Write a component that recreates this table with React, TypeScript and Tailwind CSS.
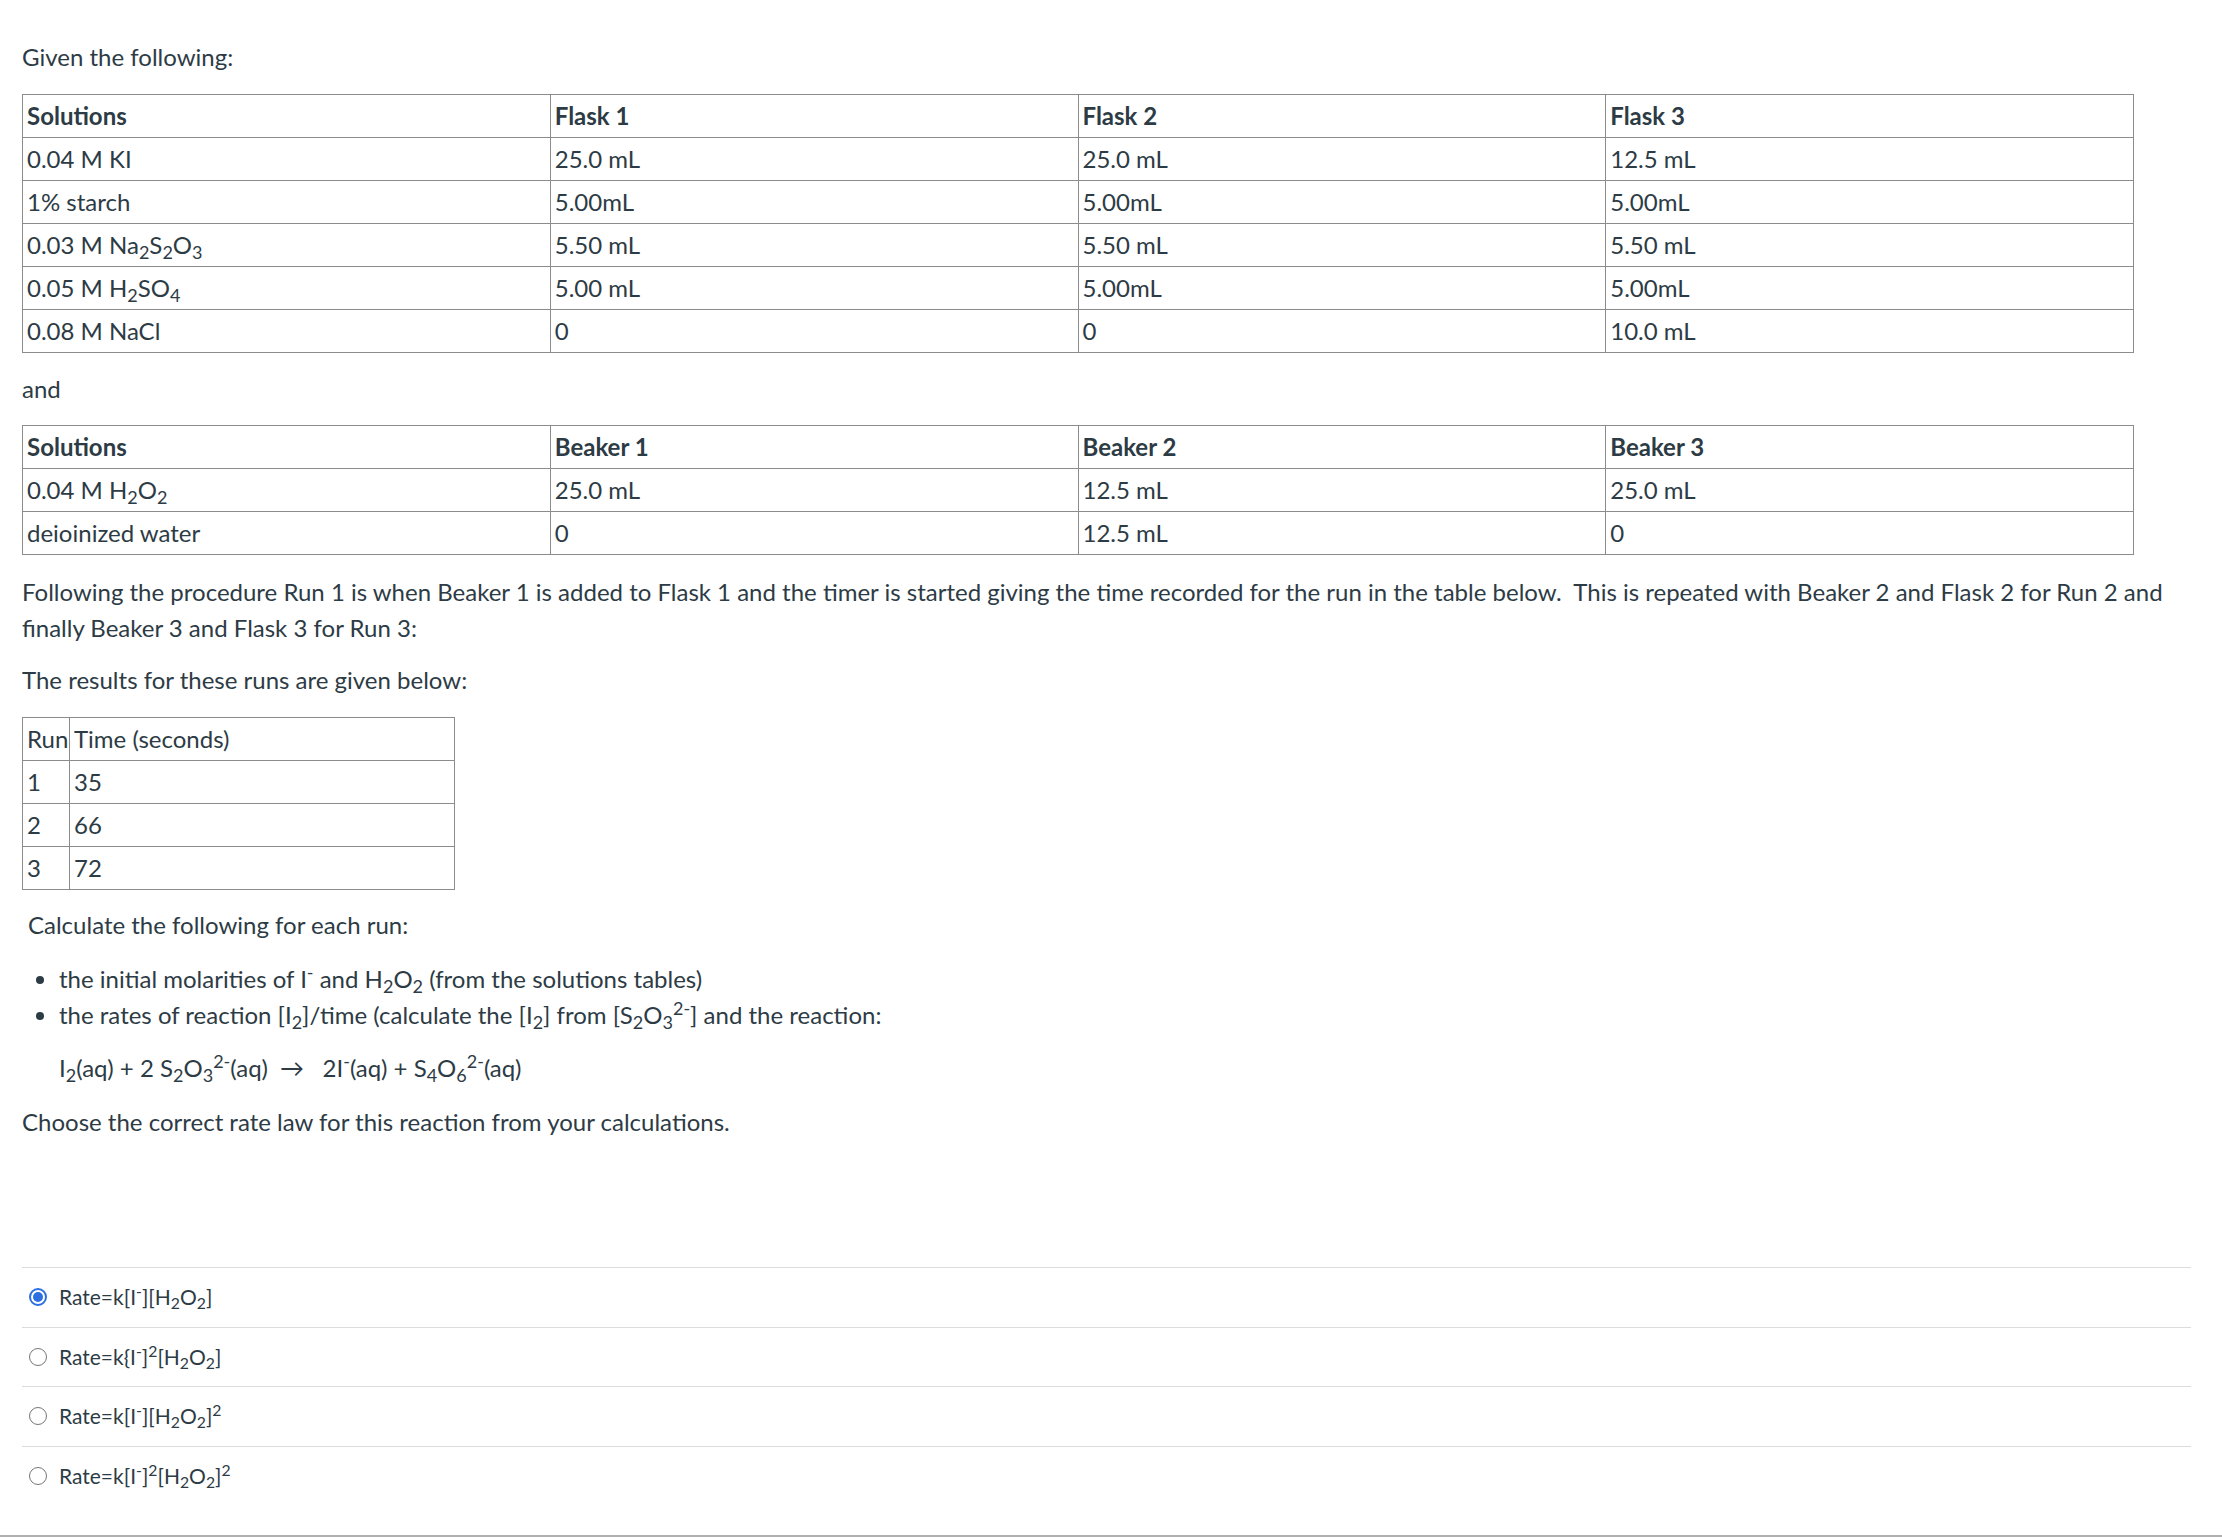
import React from "react";

const cell = "border border-[#8c8c8c] px-[4px] py-[3px] text-left align-top";
const head = cell + " font-bold";

const Minus = () => <sup>-</sup>;
const TwoMinus = () => <sup>2-</sup>;

const flaskRows: [React.ReactNode, string, string, string][] = [
  ["0.04 M KI", "25.0 mL", "25.0 mL", "12.5 mL"],
  ["1% starch", "5.00mL", "5.00mL", "5.00mL"],
  [
    <>0.03 M Na<sub>2</sub>S<sub>2</sub>O<sub>3</sub></>,
    "5.50 mL",
    "5.50 mL",
    "5.50 mL",
  ],
  [<>0.05 M H<sub>2</sub>SO<sub>4</sub></>, "5.00 mL", "5.00mL", "5.00mL"],
  ["0.08 M NaCl", "0", "0", "10.0 mL"],
];

const beakerRows: [React.ReactNode, string, string, string][] = [
  [<>0.04 M H<sub>2</sub>O<sub>2</sub></>, "25.0 mL", "12.5 mL", "25.0 mL"],
  ["deioinized water", "0", "12.5 mL", "0"],
];

const runs = [
  ["1", "35"],
  ["2", "66"],
  ["3", "72"],
];

const Radio = ({ checked }: { checked?: boolean }) =>
  checked ? (
    <span className="w-[18px] h-[18px] rounded-full border-2 border-[#2b6fe0] flex items-center justify-center shrink-0">
      <span className="w-[10px] h-[10px] rounded-full bg-[#2b6fe0]" />
    </span>
  ) : (
    <span className="w-[18px] h-[18px] rounded-full border-[1.5px] border-[#767676] shrink-0" />
  );

const options: { label: React.ReactNode; checked?: boolean }[] = [
  {
    label: <>Rate=k[I<Minus />][H<sub>2</sub>O<sub>2</sub>]</>,
    checked: true,
  },
  { label: <>Rate=k{"{"}I<Minus />]<sup>2</sup>[H<sub>2</sub>O<sub>2</sub>]</> },
  { label: <>Rate=k[I<Minus />][H<sub>2</sub>O<sub>2</sub>]<sup>2</sup></> },
  { label: <>Rate=k[I<Minus />]<sup>2</sup>[H<sub>2</sub>O<sub>2</sub>]<sup>2</sup></> },
];

export default function App() {
  return (
    <div className="bg-white w-[2222px] h-[1538px] overflow-hidden font-['Lato','Open_Sans',sans-serif] text-[#2d3b45] text-[24px] leading-[36px]">
      <div className="pl-[22px] w-[2191px] pt-[39px]">
        <p>Given the following:</p>

        <table className="mt-[19px] w-[2112px] table-fixed border-collapse">
          <tbody>
            <tr>
              <th className={head}>Solutions</th>
              <th className={head}>Flask 1</th>
              <th className={head}>Flask 2</th>
              <th className={head}>Flask 3</th>
            </tr>
            {flaskRows.map((r, i) => (
              <tr key={i}>
                {r.map((c, j) => (
                  <td key={j} className={cell}>
                    {c}
                  </td>
                ))}
              </tr>
            ))}
          </tbody>
        </table>

        <p className="mt-[18px]">and</p>

        <table className="mt-[18px] w-[2112px] table-fixed border-collapse">
          <tbody>
            <tr>
              <th className={head}>Solutions</th>
              <th className={head}>Beaker 1</th>
              <th className={head}>Beaker 2</th>
              <th className={head}>Beaker 3</th>
            </tr>
            {beakerRows.map((r, i) => (
              <tr key={i}>
                {r.map((c, j) => (
                  <td key={j} className={cell}>
                    {c}
                  </td>
                ))}
              </tr>
            ))}
          </tbody>
        </table>

        <p className="mt-[19px] pr-[20px] leading-[35.5px]">
          Following the procedure Run 1 is when Beaker 1 is added to Flask 1 and the timer is started giving the
          time recorded for the run in the table below.&nbsp; This is repeated with Beaker 2 and Flask 2 for Run 2
          and finally Beaker 3 and Flask 3 for Run 3:
        </p>

        <p className="mt-[17px]">The results for these runs are given below:</p>

        <table className="mt-[19px] w-[433px] table-fixed border-collapse">
          <colgroup>
            <col className="w-[47px]" />
            <col />
          </colgroup>
          <tbody>
            <tr>
              <td className={cell}>Run</td>
              <td className={cell}>Time (seconds)</td>
            </tr>
            {runs.map(([a, b]) => (
              <tr key={a}>
                <td className={cell}>{a}</td>
                <td className={cell}>{b}</td>
              </tr>
            ))}
          </tbody>
        </table>

        <div className="pl-[6px]">
          <p className="mt-[17px]">Calculate the following for each run:</p>
        </div>

        <ul className="mt-[18px] list-disc pl-[37px]">
          <li>
            the initial molarities of I<Minus /> and H<sub>2</sub>O<sub>2</sub> (from the solutions tables)
          </li>
          <li>
            the rates of reaction [I<sub>2</sub>]/time (calculate the [I<sub>2</sub>] from [S<sub>2</sub>O
            <sub>3</sub>
            <TwoMinus />] and the reaction:
          </li>
        </ul>

        <p className="mt-[17px] pl-[37px]">
          I<sub>2</sub>(aq) + 2 S<sub>2</sub>O<sub>3</sub>
          <TwoMinus />
          (aq)&nbsp; →&nbsp;&nbsp; 2I<Minus />(aq) + S<sub>4</sub>O<sub>6</sub>
          <TwoMinus />
          (aq)
        </p>

        <p className="mt-[18px]">Choose the correct rate law for this reaction from your calculations.</p>

        <div className="mt-[127px] w-[2169px]">
          {options.map((o, i) => (
            <div
              key={i}
              className="h-[59.5px] border-t border-[#dcdcdc] flex items-center gap-[12px] pl-[7px] text-[21px] leading-[30px]"
            >
              <Radio checked={o.checked} />
              <span>{o.label}</span>
            </div>
          ))}
        </div>
      </div>
      <div className="mt-[30px] h-[2px] bg-[#b0b0b0] w-full" />
    </div>
  );
}
